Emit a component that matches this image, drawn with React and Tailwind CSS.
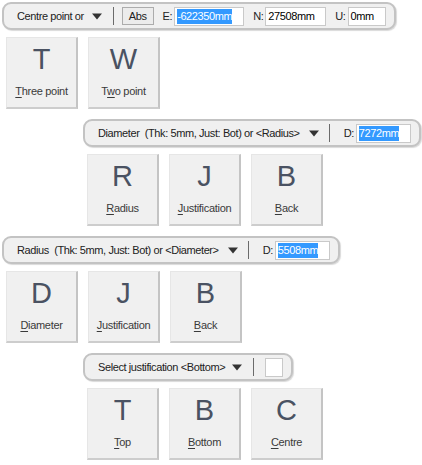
import React from 'react';

function Caret() {
  return (
    <svg width="10" height="7" viewBox="0 0 10 7" className="shrink-0">
      <path d="M0 0.5 L10 0.5 L5 6.5 Z" fill="#333" />
    </svg>
  );
}

function Sep() {
  return <div className="h-[18px] w-px bg-[#6b6b6b] shrink-0" />;
}

function Field({ label, value, width, selected }) {
  return (
    <div className="flex items-center gap-[2px]">
      {label && <span className="text-[#222]">{label}</span>}
      <div
        className={`h-[19px] ${width} bg-white border border-[#c9c9c9] flex items-center px-[2px] text-black`}
      >
        {value && (
          <span className={selected ? 'bg-[#3399ff] text-white leading-[15px]' : 'leading-[15px]'}>
            {value}
          </span>
        )}
      </div>
    </div>
  );
}

function Toolbar({ children }) {
  return (
    <div className="h-[28px] flex items-center pl-[13px] pr-[8px] rounded-[9px] border-2 border-[#c3c3c3] bg-[#f0f0f0] shadow-[1px_1px_1px_rgba(0,0,0,0.15)] text-[11px] tracking-[-0.4px] text-[#222]">
      {children}
    </div>
  );
}

function Key({ letter, label }) {
  return (
    <div className="w-[72px] h-[72px] bg-[#f0f0f0] border-t border-l border-[#e6e6e6] border-r-2 border-b-2 border-r-[#c4c4c4] border-b-[#cdcdcd] flex flex-col items-center">
      <div className="mt-[4px] h-[34px] leading-[34px] text-[29px] text-[#4a5262]">{letter}</div>
      <div className="mt-[8px] h-[14px] leading-[14px] text-[11px] tracking-[-0.3px] text-[#3a3a3a]">{label}</div>
    </div>
  );
}

function Block({ indent, toolbar, keys }) {
  return (
    <div className={`flex flex-col items-start gap-[7px] ${indent}`}>
      {toolbar}
      <div className="flex gap-[10px] ml-[4px]">
        {keys.map((k, i) => (
          <Key key={i} letter={k.letter} label={k.label} />
        ))}
      </div>
    </div>
  );
}

export default function App() {
  return (
    <div className="w-[422px] h-[465px] bg-white pt-[2px] flex flex-col gap-[10px] font-['Liberation_Sans',Arial,sans-serif] overflow-hidden">
      <Block
        indent="pl-[2px]"
        toolbar={
          <Toolbar>
            <span>Centre point or</span>
            <div className="ml-[8px]"><Caret /></div>
            <div className="ml-[11px]"><Sep /></div>
            <div className="ml-[8px] h-[18px] px-[6px] border border-[#acacac] bg-[#ececec] flex items-center">Abs</div>
            <div className="ml-[9px]"><Field label="E:" value="-622350mm" width="w-[70px]" selected /></div>
            <div className="ml-[9px]"><Field label="N:" value="27508mm" width="w-[61px]" /></div>
            <div className="ml-[9px]"><Field label="U:" value="0mm" width="w-[38px]" /></div>
          </Toolbar>
        }
        keys={[
          { letter: 'T', label: <><u className="underline-offset-2">T</u>hree point</> },
          { letter: 'W', label: <>T<u className="underline-offset-2">w</u>o point</> },
        ]}
      />
      <Block
        indent="pl-[83px]"
        toolbar={
          <Toolbar>
            <span className="whitespace-pre">Diameter  (Thk: 5mm, Just: Bot) or &lt;Radius&gt;</span>
            <div className="ml-[9px]"><Caret /></div>
            <div className="ml-[10px]"><Sep /></div>
            <div className="ml-[14px]"><Field label="D:" value="7272mm" width="w-[55px]" selected /></div>
          </Toolbar>
        }
        keys={[
          { letter: 'R', label: <><u className="underline-offset-2">R</u>adius</> },
          { letter: 'J', label: <><u className="underline-offset-2">J</u>ustification</> },
          { letter: 'B', label: <><u className="underline-offset-2">B</u>ack</> },
        ]}
      />
      <Block
        indent="pl-[2px]"
        toolbar={
          <Toolbar>
            <span className="whitespace-pre">Radius  (Thk: 5mm, Just: Bot) or &lt;Diameter&gt;</span>
            <div className="ml-[9px]"><Caret /></div>
            <div className="ml-[10px]"><Sep /></div>
            <div className="ml-[14px]"><Field label="D:" value="5508mm" width="w-[55px]" selected /></div>
          </Toolbar>
        }
        keys={[
          { letter: 'D', label: <><u className="underline-offset-2">D</u>iameter</> },
          { letter: 'J', label: <><u className="underline-offset-2">J</u>ustification</> },
          { letter: 'B', label: <><u className="underline-offset-2">B</u>ack</> },
        ]}
      />
      <Block
        indent="pl-[83px]"
        toolbar={
          <Toolbar>
            <span>Select justification &lt;Bottom&gt;</span>
            <div className="ml-[7px]"><Caret /></div>
            <div className="ml-[11px]"><Sep /></div>
            <div className="ml-[11px]"><Field width="w-[18px]" /></div>
          </Toolbar>
        }
        keys={[
          { letter: 'T', label: <><u className="underline-offset-2">T</u>op</> },
          { letter: 'B', label: <><u className="underline-offset-2">B</u>ottom</> },
          { letter: 'C', label: <><u className="underline-offset-2">C</u>entre</> },
        ]}
      />
    </div>
  );
}
